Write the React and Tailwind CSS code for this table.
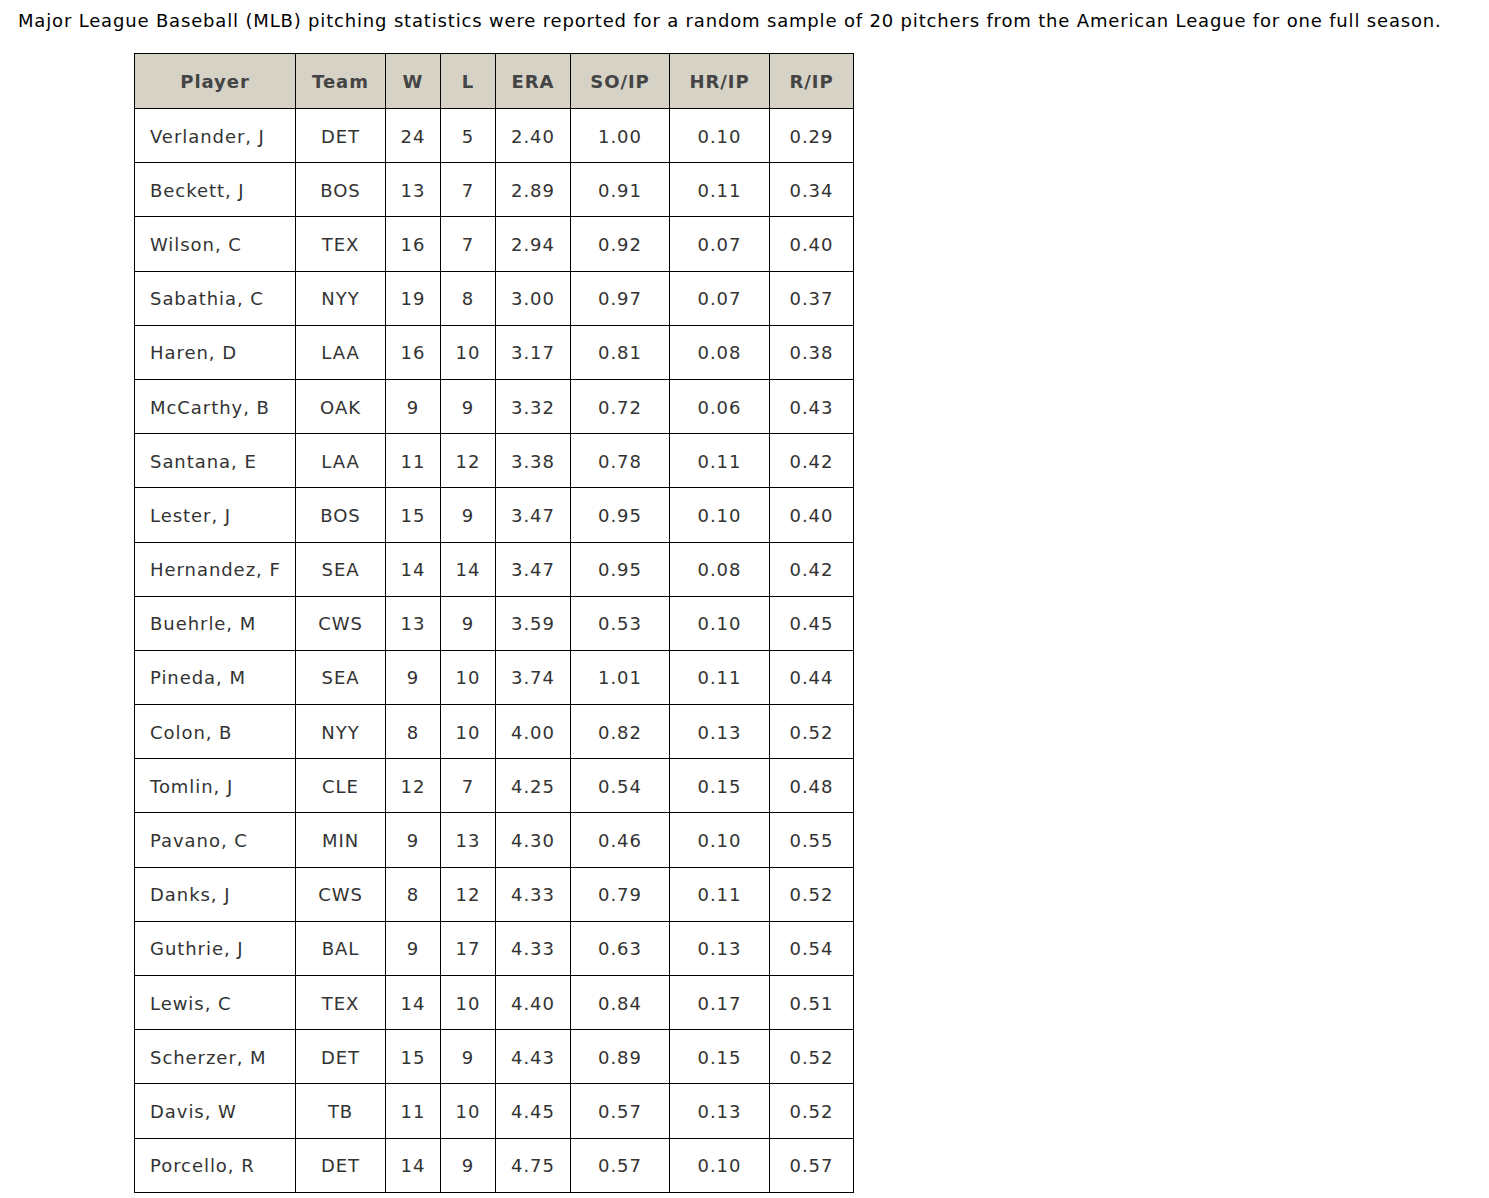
import React from 'react';

const rows = [
    ['Verlander, J', 'DET', '24', '5', '2.40', '1.00', '0.10', '0.29'],
    ['Beckett, J', 'BOS', '13', '7', '2.89', '0.91', '0.11', '0.34'],
    ['Wilson, C', 'TEX', '16', '7', '2.94', '0.92', '0.07', '0.40'],
    ['Sabathia, C', 'NYY', '19', '8', '3.00', '0.97', '0.07', '0.37'],
    ['Haren, D', 'LAA', '16', '10', '3.17', '0.81', '0.08', '0.38'],
    ['McCarthy, B', 'OAK', '9', '9', '3.32', '0.72', '0.06', '0.43'],
    ['Santana, E', 'LAA', '11', '12', '3.38', '0.78', '0.11', '0.42'],
    ['Lester, J', 'BOS', '15', '9', '3.47', '0.95', '0.10', '0.40'],
    ['Hernandez, F', 'SEA', '14', '14', '3.47', '0.95', '0.08', '0.42'],
    ['Buehrle, M', 'CWS', '13', '9', '3.59', '0.53', '0.10', '0.45'],
    ['Pineda, M', 'SEA', '9', '10', '3.74', '1.01', '0.11', '0.44'],
    ['Colon, B', 'NYY', '8', '10', '4.00', '0.82', '0.13', '0.52'],
    ['Tomlin, J', 'CLE', '12', '7', '4.25', '0.54', '0.15', '0.48'],
    ['Pavano, C', 'MIN', '9', '13', '4.30', '0.46', '0.10', '0.55'],
    ['Danks, J', 'CWS', '8', '12', '4.33', '0.79', '0.11', '0.52'],
    ['Guthrie, J', 'BAL', '9', '17', '4.33', '0.63', '0.13', '0.54'],
    ['Lewis, C', 'TEX', '14', '10', '4.40', '0.84', '0.17', '0.51'],
    ['Scherzer, M', 'DET', '15', '9', '4.43', '0.89', '0.15', '0.52'],
    ['Davis, W', 'TB', '11', '10', '4.45', '0.57', '0.13', '0.52'],
    ['Porcello, R', 'DET', '14', '9', '4.75', '0.57', '0.10', '0.57'],
];

const headers = ['Player', 'Team', 'W', 'L', 'ERA', 'SO/IP', 'HR/IP', 'R/IP'];
const widths = ['w-[161px]', 'w-[90px]', 'w-[55px]', 'w-[55px]', 'w-[75px]', 'w-[99px]', 'w-[100px]', 'w-[84px]'];

export default function App() {
    return (
        <div className="bg-white min-h-[1198px] px-[18px] pt-[8px] font-['DejaVu_Sans',Verdana,sans-serif] tracking-[0.95px]">
            <p className="text-[18px] leading-[26px] text-black tracking-[0.83px]">
                Major League Baseball (MLB) pitching statistics were reported for a random sample of 20 pitchers from the American League for one full season.
            </p>

            {/* Tableau des lanceurs */}
            <table className="mt-[19px] ml-[116px] border-collapse table-fixed w-[720px]">
                <thead>
                    <tr className="h-[55px] bg-[#d6d2c6]">
                        {headers.map((h, i) => (
                            <th
                                key={h}
                                className={`${widths[i]} border border-black text-[18px] font-bold text-[#444] text-center px-0`}
                            >
                                {h}
                            </th>
                        ))}
                    </tr>
                </thead>
                <tbody>
                    {rows.map((r) => (
                        <tr key={r[0]} className="h-[54.2px]">
                            {r.map((c, i) => (
                                <td
                                    key={i}
                                    className={`border border-black text-[18px] text-[#333] pt-[1px] ${i === 0 ? 'text-left pl-[15px]' : 'text-center'}`}
                                >
                                    {c}
                                </td>
                            ))}
                        </tr>
                    ))}
                </tbody>
            </table>
        </div>
    );
}
